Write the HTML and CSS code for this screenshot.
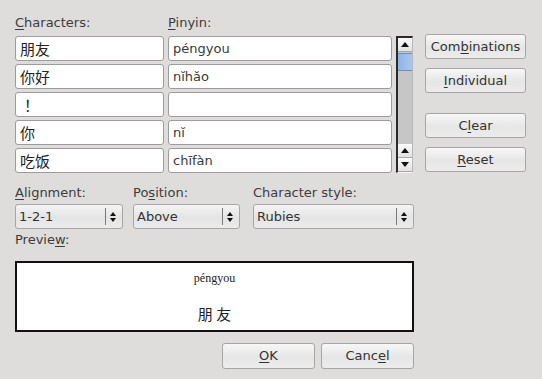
FILE: index.html
```html
<!DOCTYPE html>
<html lang="en">
<head>
    <meta charset="UTF-8">
    <link rel="stylesheet" href="styles.css">
    <title>Ruby</title>
</head>
<body>
    <div class="dialog">
        <div class="top">
            <div class="table">
                <div class="label col1"><u>C</u>haracters:</div>
                <div class="label col2"><u>P</u>inyin:</div>
                <div class="scrollbar">
                    <div class="sb-btn"><span class="tri-up"></span></div>
                    <div class="sb-thumb"></div>
                    <div class="sb-trough"></div>
                    <div class="sb-btn"><span class="tri-up"></span></div>
                    <div class="sb-btn"><span class="tri-down"></span></div>
                </div>
                <div class="cell col1 cjk">朋友</div>
                <div class="cell col2">péngyou</div>
                <div class="cell col1 cjk">你好</div>
                <div class="cell col2">nĭhăo</div>
                <div class="cell col1 cjk bang">！</div>
                <div class="cell col2"></div>
                <div class="cell col1 cjk">你</div>
                <div class="cell col2">nĭ</div>
                <div class="cell col1 cjk">吃饭</div>
                <div class="cell col2">chīfàn</div>
            </div>
            <div class="side">
                <div class="btn">Com<u>b</u>inations</div>
                <div class="btn"><u>I</u>ndividual</div>
                <div class="btn gap">C<u>l</u>ear</div>
                <div class="btn"><u>R</u>eset</div>
            </div>
        </div>

        <div class="options">
            <div class="field w-align">
                <div class="label"><u>A</u>lignment:</div>
                <div class="combo"><span class="combo-text">1-2-1</span><span class="combo-arrows"><span class="tri-up small"></span><span class="tri-down small"></span></span></div>
            </div>
            <div class="field w-pos">
                <div class="label">Po<u>s</u>ition:</div>
                <div class="combo"><span class="combo-text">Above</span><span class="combo-arrows"><span class="tri-up small"></span><span class="tri-down small"></span></span></div>
            </div>
            <div class="field w-style">
                <div class="label">Character style:</div>
                <div class="combo"><span class="combo-text">Rubies</span><span class="combo-arrows"><span class="tri-up small"></span><span class="tri-down small"></span></span></div>
            </div>
        </div>

        <div class="label preview-label">Previe<u>w</u>:</div>
        <div class="preview">
            <div class="ruby">péngyou</div>
            <div class="base">朋 友</div>
        </div>

        <div class="footer">
            <div class="btn ok"><u>O</u>K</div>
            <div class="btn ok">Canc<u>e</u>l</div>
        </div>
    </div>
</body>
</html>
```

FILE: styles.css
```css
body{
    margin: 0;
    background-color: #dfdddb;
    font-family: "DejaVu Sans", "Noto Sans CJK SC", sans-serif;
    font-size: 13px;
    color: #3c3c3c;
}
u{
    text-decoration-thickness: 1px;
    text-underline-offset: 2px;
}
.dialog{
    padding: 15px 15px 0 15px;
}
.top{
    display: flex;
    align-items: flex-start;
}
.table{
    display: grid;
    grid-template-columns: 149px 224px 17px;
    grid-template-rows: 18px repeat(5, 25px);
    column-gap: 4px;
    row-gap: 3px;
}
.col1{
    grid-column: 1;
}
.col2{
    grid-column: 2;
}
.label{
    line-height: 16px;
    white-space: nowrap;
}
.cell{
    box-sizing: border-box;
    background-color: #fff;
    border: 1px solid #9c9c9c;
    border-radius: 3px;
    padding-left: 4px;
    line-height: 23px;
    color: #3a3a3a;
}
.cjk{
    font-family: "Noto Sans CJK SC", sans-serif;
    font-size: 15px;
    color: #222;
}
.bang{
    padding-left: 8px;
}
.scrollbar{
    grid-column: 3;
    grid-row: 2 / 7;
    box-sizing: border-box;
    border-left: 2px solid #2a2a2a;
    border-top: 2px solid #2a2a2a;
    border-right: 1px solid #b8b8b8;
    border-bottom: 1px solid #f4f4f4;
    background-color: #c6c6c6;
    display: flex;
    flex-direction: column;
}
.sb-btn{
    height: 13px;
    display: flex;
    justify-content: center;
    align-items: center;
    background: linear-gradient(#fafafa, #e2e2e2);
    border-bottom: 1px solid #a8a8a8;
}
.sb-thumb{
    height: 16px;
    margin-top: 1px;
    background: linear-gradient(90deg, #8fb3e4, #a9c8ef);
    border-top: 1px solid #6b90c8;
    border-bottom: 1px solid #6b90c8;
}
.sb-trough{
    flex: 1;
}
.tri-up{
    width: 0;
    height: 0;
    border-left: 4px solid transparent;
    border-right: 4px solid transparent;
    border-bottom: 5px solid #111;
}
.tri-down{
    width: 0;
    height: 0;
    border-left: 4px solid transparent;
    border-right: 4px solid transparent;
    border-top: 5px solid #111;
}
.side{
    flex-shrink: 0;
    margin-left: 12px;
    margin-top: 19px;
    width: 101px;
    display: flex;
    flex-direction: column;
    gap: 9px;
}
.btn{
    box-sizing: border-box;
    height: 25px;
    line-height: 23px;
    text-align: center;
    border: 1px solid #a6a6a6;
    border-radius: 3px;
    background: linear-gradient(#f7f7f7, #e6e6e6 55%, #ececec);
    color: #333;
}
.gap{
    margin-top: 11px;
}
.options{
    margin-top: 12px;
    display: flex;
    width: 399px;
}
.field{
    display: flex;
    flex-direction: column;
    gap: 3px;
}
.w-align{
    width: 108px;
}
.w-pos{
    width: 107px;
    margin-left: 10px;
}
.w-style{
    width: 161px;
    margin-left: 13px;
}
.combo{
    box-sizing: border-box;
    height: 25px;
    display: flex;
    align-items: center;
    border: 1px solid #a6a6a6;
    border-radius: 3px;
    background: linear-gradient(#f4f4f4, #e4e4e4 55%, #ebebeb);
}
.combo-text{
    flex: 1;
    padding-left: 3px;
    color: #333;
}
.combo-arrows{
    width: 14px;
    height: 17px;
    border-left: 1px solid #7a7a7a;
    display: flex;
    flex-direction: column;
    justify-content: center;
    align-items: center;
    gap: 2px;
    margin-right: 2px;
}
.small{
    border-left-width: 3px;
    border-right-width: 3px;
}
.tri-up.small{
    border-bottom-width: 4px;
}
.tri-down.small{
    border-top-width: 4px;
}
.preview-label{
    margin-top: 3px;
}
.preview{
    box-sizing: border-box;
    width: 399px;
    margin-top: 13px;
    height: 71px;
    border: 2px solid #111;
    background-color: #fff;
    display: flex;
    flex-direction: column;
    align-items: center;
    padding-top: 8px;
}
.ruby{
    font-family: "Liberation Serif", serif;
    font-size: 12px;
    line-height: 14px;
    color: #222;
}
.base{
    margin-top: 19px;
    font-family: "Noto Sans CJK SC", sans-serif;
    font-size: 15px;
    line-height: 20px;
    color: #222;
}
.footer{
    width: 399px;
    margin-top: 11px;
    display: flex;
    justify-content: flex-end;
    gap: 6px;
}
.ok{
    width: 93px;
    height: 26px;
    line-height: 24px;
}
```
